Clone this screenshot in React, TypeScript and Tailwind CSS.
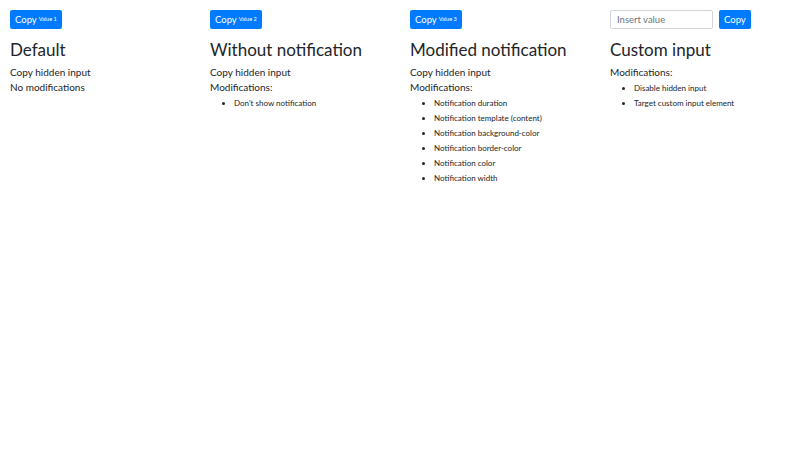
const columns = [
  {
    id: 1,
    title: 'Default',
    lines: ['Copy hidden input', 'No modifications'],
    items: [] as string[],
  },
  {
    id: 2,
    title: 'Without notification',
    lines: ['Copy hidden input', 'Modifications:'],
    items: ["Don't show notification"],
  },
  {
    id: 3,
    title: 'Modified notification',
    lines: ['Copy hidden input', 'Modifications:'],
    items: [
      'Notification duration',
      'Notification template (content)',
      'Notification background-color',
      'Notification border-color',
      'Notification color',
      'Notification width',
    ],
  },
]

function CopyButton({ value }: { value?: string }) {
  return (
    <button className="h-[19px] px-[5px] rounded-[2px] bg-[#007bff] text-white text-[9.5px] leading-none flex items-center gap-[2px]">
      <span>Copy</span>
      {value && <span className="text-[5.5px]">{value}</span>}
    </button>
  )
}

function Section({ title, lines, items }: { title: string; lines: string[]; items: string[] }) {
  return (
    <>
      <h2 className="mt-[11px] text-[17px] leading-[20px] text-[#212529]">{title}</h2>
      <div className="mt-[5px] text-[10px] leading-[15px] text-[#212529]">
        {lines.map((l) => (
          <p key={l}>{l}</p>
        ))}
      </div>
      {items.length > 0 && (
        <ul className="list-disc pl-[24px] pt-[1px] text-[8px] leading-[15px] text-[#212529]">
          {items.map((i) => (
            <li key={i}>{i}</li>
          ))}
        </ul>
      )}
    </>
  )
}

export default function App() {
  return (
    <div className="w-[800px] h-[450px] bg-white flex pt-[10px]" style={{ fontFamily: 'Lato, sans-serif' }}>
      {columns.map((c) => (
        <div key={c.id} className="w-[200px] px-[10px]">
          <CopyButton value={`Value ${c.id}`} />
          <Section title={c.title} lines={c.lines} items={c.items} />
        </div>
      ))}
      <div className="w-[200px] px-[10px]">
        <div className="flex gap-[6px]">
          <input
            placeholder="Insert value"
            className="w-[103px] h-[19px] px-[6px] border border-[#ced4da] rounded-[2px] text-[9.5px] text-[#495057] placeholder:text-[#6c757d] outline-none"
          />
          <CopyButton />
        </div>
        <Section title="Custom input" lines={['Modifications:']} items={['Disable hidden input', 'Target custom input element']} />
      </div>
    </div>
  )
}
